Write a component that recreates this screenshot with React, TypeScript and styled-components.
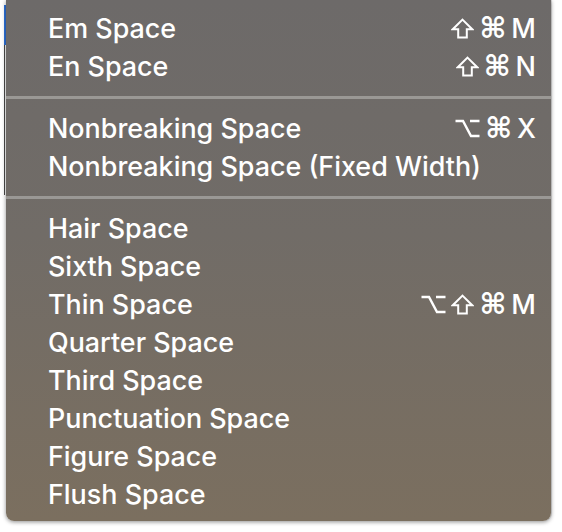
import { FC } from "react";
import styled, { createGlobalStyle } from "styled-components";

type Item = { label: string; keys?: string };

const groups: Item[][] = [
  [
    { label: "Em Space", keys: "⇧⌘M" },
    { label: "En Space", keys: "⇧⌘N" },
  ],
  [
    { label: "Nonbreaking Space", keys: "⌥⌘X" },
    { label: "Nonbreaking Space (Fixed Width)" },
  ],
  [
    { label: "Hair Space" },
    { label: "Sixth Space" },
    { label: "Thin Space", keys: "⌥⇧⌘M" },
    { label: "Quarter Space" },
    { label: "Third Space" },
    { label: "Punctuation Space" },
    { label: "Figure Space" },
    { label: "Flush Space" },
  ],
];

const ShiftIcon: FC = () => (
  <svg width="23" height="21" viewBox="0 0 23 21">
    <path
      d="M11.5 1.6 L21.2 11.2 H15.8 V19.6 H7.2 V11.2 H1.8 Z"
      fill="none"
      stroke="#fff"
      strokeWidth="2"
      strokeLinejoin="miter"
    />
  </svg>
);

const OptionIcon: FC = () => (
  <svg width="25" height="19" viewBox="0 0 25 19">
    <path
      d="M0.5 2 H8 L16 17 H24.5 M15 2 H24.5"
      fill="none"
      stroke="#fff"
      strokeWidth="2.4"
    />
  </svg>
);

const KeyGlyph: FC<{ ch: string }> = ({ ch }) => {
  if (ch === "⇧") return <ShiftIcon />;
  if (ch === "⌥") return <OptionIcon />;
  return <Glyph $cmd={ch === "⌘"}>{ch}</Glyph>;
};

const App: FC = () => {
  return (
    <Page>
      <GlobalStyle />
      <Menu>
        {groups.map((group, gi) => (
          <Group key={gi} $first={gi === 0}>
            {group.map((item) => (
              <Row key={item.label}>
                <Label>{item.label}</Label>
                {item.keys && (
                  <Keys>
                    {Array.from(item.keys).map((ch, i) => (
                      <KeyGlyph key={i} ch={ch} />
                    ))}
                  </Keys>
                )}
              </Row>
            ))}
          </Group>
        ))}
      </Menu>
    </Page>
  );
};

export default App;

const GlobalStyle = createGlobalStyle`
  html, body {
    margin: 0;
    padding: 0;
    background: #fff;
  }
`;

const Page = styled.div`
  width: 562px;
  height: 532px;
  padding-left: 6px;
  box-sizing: border-box;
  background:
    linear-gradient(#2f74dc, #2f74dc) 4px 5px / 2px 40px no-repeat,
    linear-gradient(#4a4a4a, #4a4a4a) 4px 45px / 1px 150px no-repeat,
    #fff;
`;

const Menu = styled.div`
  width: 545px;
  padding: 9px 0 8px;
  border-radius: 0 0 8px 8px;
  background: linear-gradient(180deg, #6d6a69 0%, #716c67 45%, #7b6f5f 100%);
  box-shadow: 0 1px 4px rgba(0, 0, 0, 0.45), 1px 0 0 rgba(0, 0, 0, 0.12);
  font-family: Inter, "Liberation Sans", sans-serif;
  color: #fff;
`;

const Group = styled.div<{ $first: boolean }>`
  ${(p) =>
    !p.$first &&
    `
    margin-top: 11px;
    padding-top: 10px;
    border-top: 3px solid #9a9895;
  `}
`;

const Row = styled.div`
  height: 38px;
  display: flex;
  align-items: center;
  justify-content: space-between;
  padding: 0 15px 0 42px;
`;

const Label = styled.span`
  font-size: 26.9px;
  font-weight: 500;
`;

const Keys = styled.span`
  display: flex;
  align-items: center;
  gap: 5px;
`;

const Glyph = styled.span<{ $cmd: boolean }>`
  font-family: ${(p) => (p.$cmd ? '"DejaVu Sans"' : "Inter")}, sans-serif;
  font-size: ${(p) => (p.$cmd ? "29px" : "27px")};
  font-weight: ${(p) => (p.$cmd ? 700 : 500)};
  line-height: 1;
`;
